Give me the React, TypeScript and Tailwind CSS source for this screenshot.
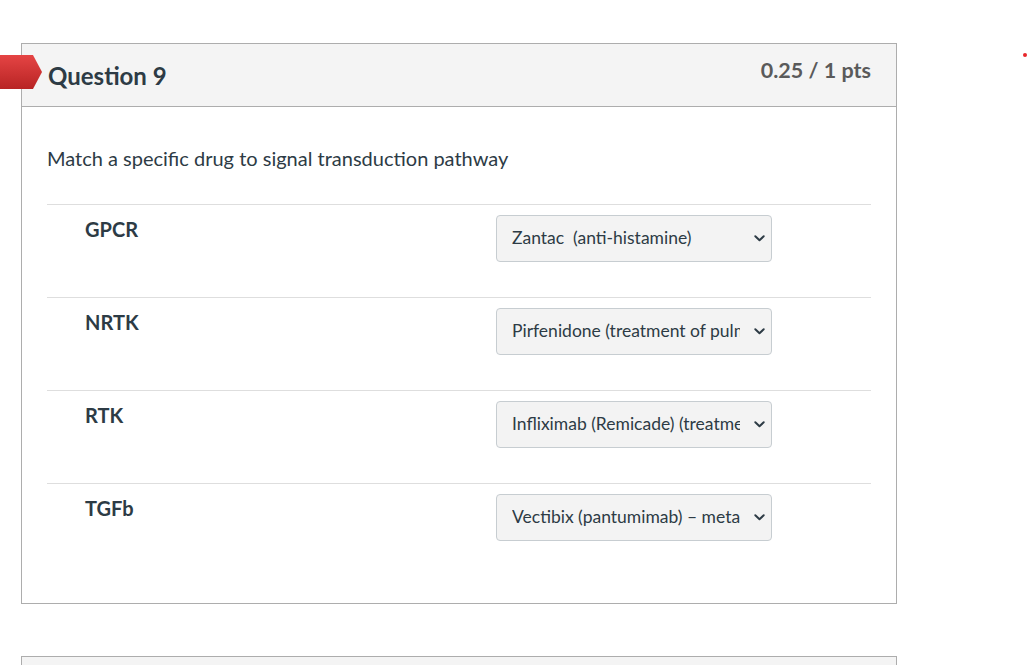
const rows = [
  { label: 'GPCR', value: 'Zantac  (anti-histamine)' },
  { label: 'NRTK', value: 'Pirfenidone (treatment of pulmonary fibrosis)' },
  { label: 'RTK', value: 'Infliximab (Remicade) (treatment of rheumatoid arthritis)' },
  { label: 'TGFb', value: 'Vectibix (pantumimab) – metastatic colorectal cancer' },
]

function Chevron() {
  return (
    <svg width="11" height="7" viewBox="0 0 11 7" className="shrink-0">
      <path d="M1.3 1.3 L5.5 5.2 L9.7 1.3" fill="none" stroke="#2d3b45" strokeWidth="2" strokeLinecap="round" strokeLinejoin="round" />
    </svg>
  )
}

function Flag() {
  return (
    <svg width="42" height="34" viewBox="0 0 42 34" className="absolute left-0 top-[55px]">
      <defs>
        <linearGradient id="flag" x1="0" y1="0" x2="0" y2="1">
          <stop offset="0" stopColor="#e54444" />
          <stop offset="1" stopColor="#b82424" />
        </linearGradient>
      </defs>
      <polygon points="0,0 33,0 42,17 33,34 0,34" fill="url(#flag)" />
    </svg>
  )
}

export default function App() {
  return (
    <div className="relative h-[665px] w-full overflow-hidden bg-white font-['Lato','Liberation_Sans',sans-serif] text-[#2d3b45]">
      <div className="ml-[21px] w-[876px] pt-[43px]">
        {/* карточка вопроса */}
        <div className="border border-[#adadad]">
          <div className="flex h-[63px] items-start justify-between border-b border-[#adadad] bg-[#f4f4f4] pl-[26px] pr-[25px]">
            <h2 className="pt-[17px] text-[24px] font-bold leading-[30px]">Question 9</h2>
            <div className="pt-[12px] text-[21.5px] font-bold leading-[28px] text-[#5a5a5a]">0.25 / 1 pts</div>
          </div>

          <div className="px-[25px] pt-[36px] pb-[27px]">
            <p className="text-[20px] leading-[30px]">Match a specific drug to signal transduction pathway</p>

            <div className="mt-[31px]">
              {rows.map((row) => (
                <div key={row.label} className="flex border-t border-[#dedede] pt-[10px] pb-[35px]">
                  <div className="w-[449px] pl-[38px] text-[20px] font-bold leading-[28px]">{row.label}</div>
                  <div className="flex h-[47px] w-[276px] items-center rounded-[4px] border border-[#c7cdd1] bg-[#f3f3f3] pl-[15px] pr-[5px]">
                    <div className="min-w-0 flex-1 overflow-hidden whitespace-pre text-[17.5px]">{row.value}</div>
                    <div className="ml-[12px] flex w-[14px] justify-center">
                      <Chevron />
                    </div>
                  </div>
                </div>
              ))}
            </div>
          </div>
        </div>

        {/* следующий вопрос */}
        <div className="mt-[52px] h-[40px] border border-[#adadad] bg-[#f4f4f4]" />
      </div>

      <Flag />
      <div className="absolute left-[1023px] top-[53px] h-[4px] w-[4px] rounded-full bg-[#e8262b]" />
    </div>
  )
}
